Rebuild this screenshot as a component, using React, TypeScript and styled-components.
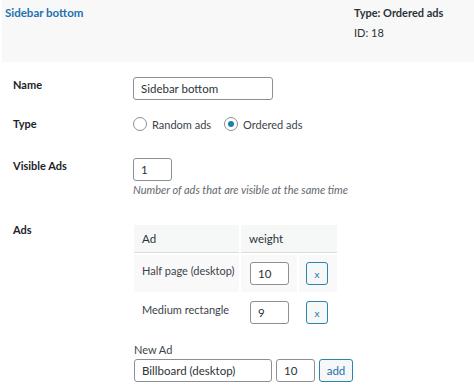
import React from "react";
import styled, { createGlobalStyle } from "styled-components";

const Global = createGlobalStyle`
  html, body { margin: 0; padding: 0; background: #fff; }
  body {
    font-family: Lato, "Open Sans", sans-serif;
    font-size: 11px;
    color: #1d2327;
    width: 474px;
    height: 387px;
    overflow: hidden;
  }
  * { box-sizing: border-box; }
`;

const Page = styled.div`
  display: flex;
  flex-direction: column;
`;

const Header = styled.div`
  margin-left: 2px;
  height: 62px;
  background: #f8f8f8;
  display: flex;
  justify-content: space-between;
  padding: 5px 0 0 3px;
`;

const Title = styled.div`
  color: #2271b1;
  font-weight: 700;
  font-size: 11.5px;
  line-height: 16px;
`;

const Meta = styled.div`
  width: 120px;
  display: flex;
  flex-direction: column;
  gap: 4px;
  line-height: 16px;
`;

const MetaLine = styled.div<{ $strong?: boolean }>`
  font-weight: ${(p) => (p.$strong ? 700 : 400)};
  color: #2c3338;
`;

const Form = styled.div`
  display: flex;
  flex-direction: column;
  padding-left: 13px;
`;

const Row = styled.div<{ $top: number }>`
  display: grid;
  grid-template-columns: 120px 1fr;
  margin-top: ${(p) => p.$top}px;
`;

const Label = styled.div`
  font-weight: 700;
  line-height: 16px;
  color: #1d2327;
`;

const Field = styled.div`
  display: flex;
  flex-direction: column;
  align-items: flex-start;
`;

const Input = styled.input<{ $w: number }>`
  width: ${(p) => p.$w}px;
  height: 23px;
  border: 1px solid #8c8f94;
  border-radius: 3px;
  padding: 0 7px;
  font-family: inherit;
  font-size: 11.5px;
  color: #2c3338;
  background: #fff;
  outline: none;
`;

const Radios = styled.div`
  display: flex;
  align-items: center;
  height: 16px;
  gap: 13px;
`;

const RadioOpt = styled.label`
  display: flex;
  align-items: center;
  gap: 5px;
  color: #3c434a;
`;

const RadioCircle = styled.span<{ $on?: boolean }>`
  width: 14px;
  height: 14px;
  border-radius: 50%;
  border: 1px solid #8c8f94;
  background: #fff;
  display: flex;
  align-items: center;
  justify-content: center;
  &::after {
    content: "";
    width: 6px;
    height: 6px;
    border-radius: 50%;
    background: ${(p) => (p.$on ? "#1a82a8" : "transparent")};
  }
`;

const Desc = styled.div`
  font-style: italic;
  color: #646970;
  line-height: 16px;
  margin-top: 1px;
`;

const Table = styled.table`
  border-collapse: separate;
  border-spacing: 2px 2px;
  margin: 1px 0 0 -1px;
`;

const Th = styled.th`
  background: #f6f7f7;
  font-weight: 400;
  text-align: left;
  height: 28px;
  padding: 0 8px;
  color: #2c3338;
  border-bottom: 1px solid #dcdcde;
  font-size: 11.5px;
`;

const Tr = styled.tr<{ $alt?: boolean }>`
  background: ${(p) => (p.$alt ? "#f9f9f9" : "#fff")};
`;

const Td = styled.td<{ $w: number; $padL: number }>`
  width: ${(p) => p.$w}px;
  min-width: ${(p) => p.$w}px;
  height: 37px;
  padding: 7px 0 0 ${(p) => p.$padL}px;
  vertical-align: top;
  color: #3c434a;
  white-space: nowrap;
`;

const CellText = styled.div`
  padding-top: 1px;
  line-height: 16px;
`;

const SmallBtn = styled.button<{ $w: number }>`
  width: ${(p) => p.$w}px;
  height: 23px;
  border: 1px solid #2b84ad;
  border-radius: 3px;
  background: #f6f7f7;
  color: #2271b1;
  font-family: inherit;
  font-size: 10px;
  padding: 0;
  cursor: pointer;
`;

const AddBtn = styled(SmallBtn)`
  font-size: 11.5px;
`;

const NewAd = styled.div`
  margin: 9px 0 0 134px;
  display: flex;
  flex-direction: column;
`;

const NewAdLabel = styled.div`
  color: #3c434a;
  line-height: 16px;
  margin-bottom: 1px;
`;

const NewAdControls = styled.div`
  display: flex;
  gap: 4px;
  align-items: center;
`;

const ads = [
  { name: "Half page (desktop)", weight: "10" },
  { name: "Medium rectangle", weight: "9" },
];

export default function App() {
  return (
    <Page>
      <Global />
      <Header>
        <Title>Sidebar bottom</Title>
        <Meta>
          <MetaLine $strong>Type: Ordered ads</MetaLine>
          <MetaLine>ID: 18</MetaLine>
        </Meta>
      </Header>
      <Form>
        <Row $top={15}>
          <Label>Name</Label>
          <Field>
            <Input $w={140} defaultValue="Sidebar bottom" />
          </Field>
        </Row>
        <Row $top={16}>
          <Label>Type</Label>
          <Radios>
            <RadioOpt>
              <RadioCircle />
              Random ads
            </RadioOpt>
            <RadioOpt>
              <RadioCircle $on />
              Ordered ads
            </RadioOpt>
          </Radios>
        </Row>
        <Row $top={26}>
          <Label>Visible Ads</Label>
          <Field>
            <Input $w={39} defaultValue="1" />
            <Desc>Number of ads that are visible at the same time</Desc>
          </Field>
        </Row>
        <Row $top={24}>
          <Label>Ads</Label>
          <Field>
            <Table>
              <thead>
                <tr>
                  <Th>Ad</Th>
                  <Th colSpan={2}>weight</Th>
                </tr>
              </thead>
              <tbody>
                {ads.map((a, i) => (
                  <Tr key={a.name} $alt={i % 2 === 0}>
                    <Td $w={105} $padL={8}>
                      <CellText>{a.name}</CellText>
                    </Td>
                    <Td $w={56} $padL={9}>
                      <Input $w={39} defaultValue={a.weight} />
                    </Td>
                    <Td $w={38} $padL={7}>
                      <SmallBtn $w={22}>x</SmallBtn>
                    </Td>
                  </Tr>
                ))}
              </tbody>
            </Table>
          </Field>
        </Row>
      </Form>
      <NewAd>
        <NewAdLabel>New Ad</NewAdLabel>
        <NewAdControls>
          <Input $w={138} defaultValue="Billboard (desktop)" />
          <Input $w={39} defaultValue="10" />
          <AddBtn $w={34}>add</AddBtn>
        </NewAdControls>
      </NewAd>
    </Page>
  );
}
